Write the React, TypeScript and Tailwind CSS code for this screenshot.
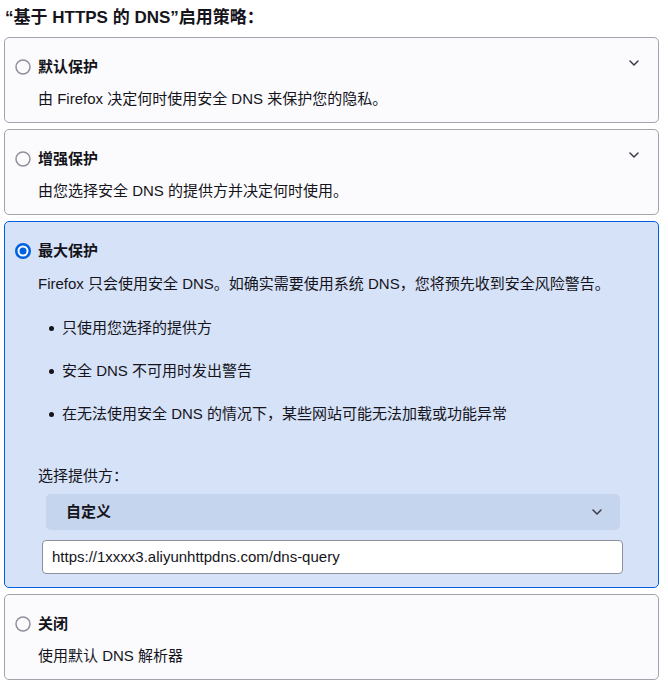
import React from 'react'

const font = { fontFamily: '"Liberation Sans", "Noto Sans CJK SC", sans-serif' }

function Radio({ checked }: { checked?: boolean }) {
    return checked ? (
        <svg width="16" height="16" viewBox="0 0 16 16" className="shrink-0">
            <circle cx="8" cy="8" r="6.75" fill="#fbfbfe" stroke="#0061e0" strokeWidth="2.5"/>
            <circle cx="8" cy="8" r="3.5" fill="#0061e0"/>
        </svg>
    ) : (
        <svg width="16" height="16" viewBox="0 0 16 16" className="shrink-0">
            <circle cx="8" cy="8" r="7" fill="#fbfbfe" stroke="#8f8f9d" strokeWidth="1.5"/>
        </svg>
    )
}

function Chevron({ className }: { className?: string }) {
    return (
        <svg width="10" height="6" viewBox="0 0 10 6" className={ className }>
            <path d="M1 1l4 4 4-4" fill="none" stroke="#3a3944" strokeWidth="1.5" strokeLinecap="round"
                  strokeLinejoin="round"/>
        </svg>
    )
}

function Option({ label, desc, chevron }: { label: string, desc: string, chevron?: boolean }) {
    return (
        <div className="relative border border-[#a3a3ad] rounded-[5px] bg-[#fbfbfe] pl-[10px] pr-4 pt-[19px] pb-[13px]">
            <div className="flex items-center gap-[7px] h-5">
                <Radio/>
                <span className="font-bold text-[15px]">{ label }</span>
            </div>
            <div className="mt-[12px] pl-[23px] h-5 leading-5 text-[15px]">{ desc }</div>
            { chevron && <Chevron className="absolute right-[19px] top-[22px]"/> }
        </div>
    )
}

export default function App() {
    const bullets = [
        '只使用您选择的提供方',
        '安全 DNS 不可用时发出警告',
        '在无法使用安全 DNS 的情况下，某些网站可能无法加载或功能异常',
    ]
    return (
        <div className="w-[668px] h-[689px] bg-white text-[#15141a] pl-[4px] pr-[9px] pt-[8px]" style={ font }>
            <div className="pl-[1px] h-5 leading-5 text-[17px] font-bold mb-[9px]">“基于 HTTPS 的 DNS”启用策略：</div>
            <div className="flex flex-col gap-[6px]">
                <Option label="默认保护" desc="由 Firefox 决定何时使用安全 DNS 来保护您的隐私。" chevron/>
                <Option label="增强保护" desc="由您选择安全 DNS 的提供方并决定何时使用。" chevron/>

                <div className="border border-[#0061e0] rounded-[5px] bg-[#d5e2f8] pl-[10px] pr-[35px] pt-[19px] pb-[13px]">
                    <div className="flex items-center gap-[7px] h-5">
                        <Radio checked/>
                        <span className="font-bold text-[15px]">最大保护</span>
                    </div>
                    <div className="pl-[23px] text-[15px]">
                        <div className="mt-[13px] h-5 leading-5">Firefox 只会使用安全 DNS。如确实需要使用系统 DNS，您将预先收到安全风险警告。</div>
                        <ul className="mt-[24px] flex flex-col gap-[23px] pl-[11px]">
                            { bullets.map((b) => (
                                <li key={ b } className="flex items-center h-5 leading-5">
                                    <span className="w-[5px] h-[5px] rounded-full bg-[#15141a] mr-[8px]"/>
                                    { b }
                                </li>
                            )) }
                        </ul>
                        <div className="mt-[42px] h-5 leading-5">选择提供方：</div>
                        <div className="mt-[8px] ml-[8px] mr-[3px] h-[36px] rounded-[5px] bg-[#c6d5ee] flex items-center justify-between pl-[20px] pr-[18px]">
                            <span className="font-bold">自定义</span>
                            <Chevron/>
                        </div>
                        <div className="mt-[10px] ml-[4px] h-[34px] rounded-[4px] bg-white border border-[#8f8f9d] flex items-center pl-[9px]">
                            https://1xxxx3.aliyunhttpdns.com/dns-query
                        </div>
                    </div>
                </div>

                <Option label="关闭" desc="使用默认 DNS 解析器"/>
            </div>
        </div>
    )
}
